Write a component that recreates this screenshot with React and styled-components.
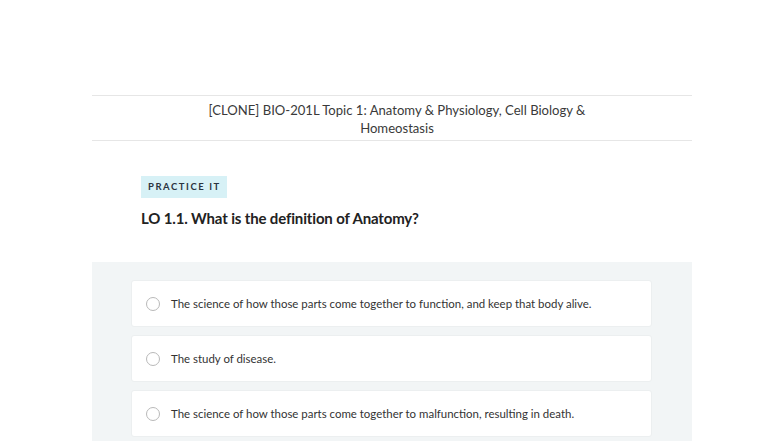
import React from "react";
import styled, { createGlobalStyle } from "styled-components";

const Global = createGlobalStyle`
  html, body { margin: 0; padding: 0; background: #fff; }
  body { font-family: Lato, "Open Sans", sans-serif; color: #333; }
  * { box-sizing: border-box; }
`;

const Page = styled.div`
  width: 784px;
  height: 441px;
  overflow: hidden;
  padding-top: 95px;
  display: flex;
  justify-content: center;
`;

const Container = styled.div`
  width: 600px;
  display: flex;
  flex-direction: column;
`;

const Header = styled.header`
  border-top: 1px solid #e6e6e6;
  border-bottom: 1px solid #e6e6e6;
  padding: 5px 0 3px;
  display: flex;
  justify-content: center;
`;

const Title = styled.h1`
  margin: 0;
  max-width: 410px;
  padding-left: 10px;
  text-align: center;
  font-size: 13.1px;
  line-height: 18px;
  font-weight: 400;
  color: #3a3a3a;
`;

const Content = styled.section`
  padding: 35px 49px 0;
  display: flex;
  flex-direction: column;
  align-items: flex-start;
`;

const Badge = styled.span`
  background: #d7f1f6;
  color: #2b3440;
  font-size: 9.5px;
  font-weight: 700;
  letter-spacing: 1.55px;
  line-height: 22px;
  height: 22px;
  padding: 0 6px 0 7px;
`;

const Question = styled.h2`
  margin: 10px 0 0;
  font-size: 15px;
  line-height: 20px;
  font-weight: 700;
  color: #222;
  letter-spacing: -0.15px;
`;

const Choices = styled.div`
  margin-top: 34px;
  background: #f2f5f6;
  padding: 18px 40px 18px 39px;
  display: flex;
  flex-direction: column;
  gap: 8px;
`;

const Choice = styled.label`
  display: flex;
  align-items: center;
  gap: 11px;
  height: 47px;
  padding: 0 14px;
  background: #fff;
  border-radius: 3px;
  border: 1px solid #eceff0;
  font-size: 11.45px;
  color: #333;
  cursor: pointer;
`;

const Radio = styled.span`
  width: 14px;
  height: 14px;
  flex: 0 0 14px;
  border-radius: 50%;
  border: 1.5px solid #b9b9b9;
  background: #fff;
`;

const choices = [
  "The science of how those parts come together to function, and keep that body alive.",
  "The study of disease.",
  "The science of how those parts come together to malfunction, resulting in death.",
];

export default function App() {
  return (
    <>
      <Global />
      <Page>
        <Container>
          <Header>
            <Title>[CLONE] BIO-201L Topic 1: Anatomy &amp; Physiology, Cell Biology &amp; Homeostasis</Title>
          </Header>
          <Content>
            <Badge>PRACTICE IT</Badge>
            <Question>LO 1.1. What is the definition of Anatomy?</Question>
          </Content>
          <Choices>
            {choices.map((c) => (
              <Choice key={c}>
                <Radio />
                {c}
              </Choice>
            ))}
          </Choices>
        </Container>
      </Page>
    </>
  );
}
